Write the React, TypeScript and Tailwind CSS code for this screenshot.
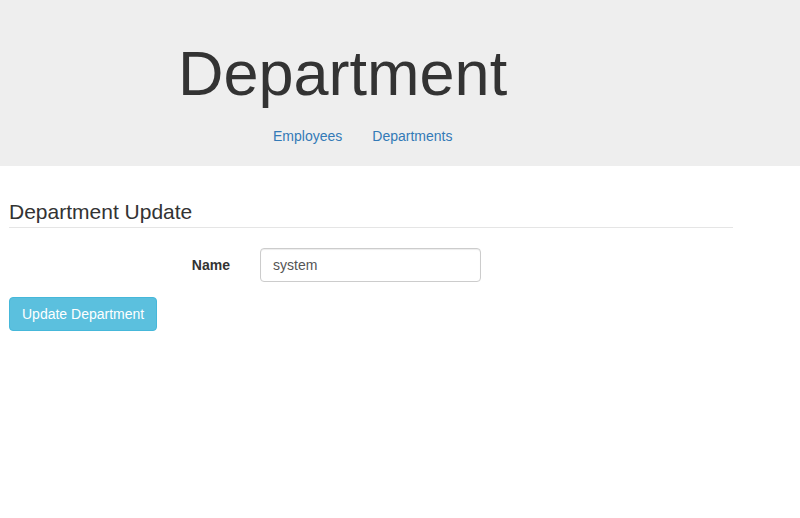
export default function App() {
	return (
		<div className="min-h-[518px] bg-white font-['Liberation_Sans',Arial,sans-serif] text-[14px] leading-[20px] text-[#333]">
			<header className="h-[166px] bg-[#eeeeee] pt-[39px]">
				<h1 className="ml-[178px] text-[63px] leading-[69px] font-normal text-[#333]">
					Department
				</h1>
				<nav className="mt-[13px] ml-[258px] flex">
					<a href="#" className="px-[15px] py-[5px] text-[#337ab7]">
						Employees
					</a>
					<a href="#" className="px-[15px] py-[5px] text-[#337ab7]">
						Departments
					</a>
				</nav>
			</header>

			<main className="px-[9px] pt-[31px]">
				<form onSubmit={(e) => e.preventDefault()}>
					<div className="w-[724px] border-b border-[#e5e5e5] text-[21px] leading-[30px] text-[#333]">
						Department Update
					</div>

					<div className="mt-[20px] flex items-center">
						<label className="w-[221px] text-right font-bold">Name</label>
						<input
							type="text"
							defaultValue="system"
							className="ml-[30px] h-[34px] w-[221px] rounded-[4px] border border-[#cccccc] px-[12px] py-[6px] text-[14px] text-[#555] shadow-[inset_0_1px_1px_rgba(0,0,0,0.075)] outline-none"
						/>
					</div>

					<button
						type="submit"
						className="mt-[15px] h-[34px] rounded-[4px] border border-[#46b8da] bg-[#5bc0de] px-[12px] text-[14px] text-white"
					>
						Update Department
					</button>
				</form>
			</main>
		</div>
	);
}
